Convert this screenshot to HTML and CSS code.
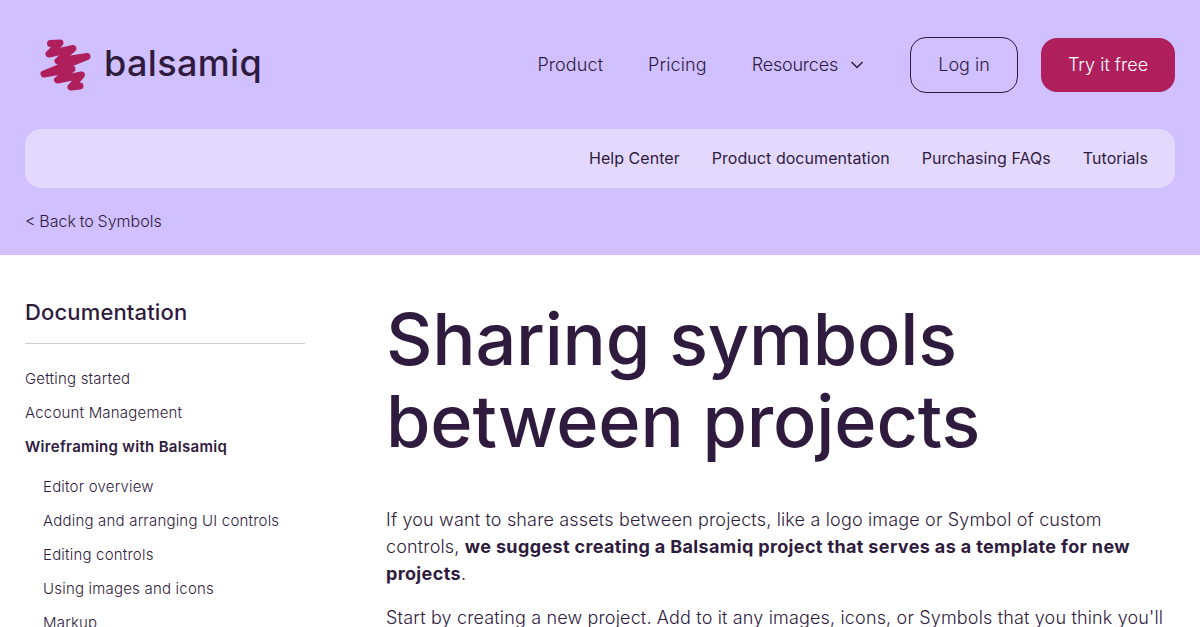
FILE: index.html
```html
<!DOCTYPE html>
<html lang="en">

<head>
  <meta charset="UTF-8">
  <title>Sharing symbols between projects</title>
  <link rel="stylesheet" href="styles.css">
</head>

<body>

  <header class="top">
    <div class="nav">
      <a class="logo" href="#">
        <svg class="logo-mark" viewBox="0 0 54 54" width="54" height="54" aria-hidden="true">
          <path d="M11.5 5.5 L21 5 L10 16 L34 10.5 L19 23 L48 18.5 L5 36 L33 31 L18.5 42 L42.5 37 L32 49 L41 48" fill="none" stroke="#ae1f5b" stroke-width="7" stroke-linecap="round" stroke-linejoin="round"/>
        </svg>
        <span class="logo-text">balsamiq</span>
      </a>
      <nav class="nav-links">
        <a href="#">Product</a>
        <a href="#">Pricing</a>
        <a href="#" class="has-menu">Resources
          <svg viewBox="0 0 14 8" width="14" height="8" aria-hidden="true">
            <path d="M1.5 1 L7 6.5 L12.5 1" fill="none" stroke="#2f1b3d" stroke-width="1.5"/>
          </svg>
        </a>
      </nav>
      <a href="#" class="btn btn-login">Log in</a>
      <a href="#" class="btn btn-try">Try it free</a>
    </div>

    <div class="subnav">
      <a href="#">Help Center</a>
      <a href="#">Product documentation</a>
      <a href="#">Purchasing FAQs</a>
      <a href="#">Tutorials</a>
    </div>

    <a href="#" class="back">&lt; Back to Symbols</a>
  </header>

  <div class="main">
    <aside class="sidebar">
      <h2>Documentation</h2>
      <ul class="side-list">
        <li><a href="#">Getting started</a></li>
        <li><a href="#">Account Management</a></li>
        <li><a href="#" class="current">Wireframing with Balsamiq</a></li>
      </ul>
      <ul class="side-sub">
        <li><a href="#">Editor overview</a></li>
        <li><a href="#">Adding and arranging UI controls</a></li>
        <li><a href="#">Editing controls</a></li>
        <li><a href="#">Using images and icons</a></li>
        <li><a href="#">Markup</a></li>
      </ul>
    </aside>

    <article class="content">
      <h1>Sharing symbols between projects</h1>
      <p>If you want to share assets between projects, like a logo image or Symbol of custom controls, <strong>we suggest creating a Balsamiq project that serves as a template for new projects</strong>.</p>
      <p>Start by creating a new project. Add to it any images, icons, or Symbols that you think you'll</p>
    </article>
  </div>

</body>

</html>
```

FILE: styles.css
```css
html,
body {
  height: 627px;
  overflow: hidden;
}

body {
  margin: 0;
  background-color: #fff;
  color: #2f1b3d;
  font-family: "Inter", "Noto Sans", sans-serif;
}

a {
  color: inherit;
  text-decoration: none;
}

/* Header */
.top {
  background-color: #d0c0ff;
  height: 255px;
  padding: 0 25px;
  box-sizing: border-box;
}

.nav {
  display: flex;
  align-items: center;
  height: 129px;
}

.logo {
  display: flex;
  align-items: center;
  gap: 11px;
  margin-left: 14px;
}

.logo-mark {
  display: block;
}

.logo-text {
  padding-bottom: 4px;
  font-size: 36px;
  font-weight: 500;
  letter-spacing: 0.35px;
}

.nav-links {
  display: flex;
  gap: 45px;
  margin-left: auto;
  font-size: 18px;
  font-weight: 300;
  letter-spacing: 0.1px;
}

.has-menu {
  display: flex;
  align-items: center;
  gap: 12px;
  letter-spacing: -0.2px;
}

.btn {
  display: flex;
  align-items: center;
  justify-content: center;
  box-sizing: border-box;
  font-size: 18px;
  font-weight: 300;
}

.btn-login {
  width: 108px;
  height: 56px;
  margin-left: 46px;
  border: 1px solid #2f1b3d;
  border-radius: 16px;
}

.btn-try {
  width: 134px;
  height: 54px;
  margin-left: 23px;
  background-color: #ae1f5b;
  color: #fff;
  border-radius: 16px;
}

.subnav {
  display: flex;
  justify-content: flex-end;
  align-items: center;
  gap: 32px;
  height: 59px;
  padding-right: 27px;
  padding-bottom: 2px;
  box-sizing: border-box;
  background-color: #e3d9ff;
  border-radius: 16px;
  font-size: 16px;
  font-weight: 400;
  letter-spacing: 0.05px;
}

.back {
  display: block;
  margin-top: 23px;
  font-size: 16px;
  font-weight: 300;
  word-spacing: -0.7px;
}

/* Page body */
.main {
  display: flex;
  padding: 0 25px;
}

.sidebar {
  width: 280px;
  flex-shrink: 0;
  padding-top: 43px;
}

.sidebar h2 {
  margin: 0;
  padding-bottom: 17px;
  border-bottom: 1px solid #d0d0d0;
  font-size: 22px;
  line-height: 28px;
  font-weight: 500;
  letter-spacing: 0.15px;
}

.side-list,
.side-sub {
  list-style: none;
  margin: 0;
  padding: 0;
  font-size: 15px;
  font-weight: 300;
  letter-spacing: 0.2px;
}

.side-list {
  margin-top: 18px;
}

.side-list li,
.side-sub li {
  height: 34px;
  line-height: 34px;
}

.side-sub {
  margin-top: 6px;
  padding-left: 18px;
}

.current {
  font-weight: 600;
  letter-spacing: 0.3px;
}

.content {
  margin-left: 81px;
  flex: 1;
}

.content h1 {
  margin: 43px 0 44px;
  font-size: 72px;
  line-height: 82px;
  font-weight: 500;
  letter-spacing: -0.2px;
}

.content p {
  max-width: 780px;
  margin: 0 0 17px;
  font-size: 18px;
  line-height: 27px;
  font-weight: 300;
  letter-spacing: 0.16px;
}

.content strong {
  font-weight: 700;
  letter-spacing: 0.36px;
}
```
